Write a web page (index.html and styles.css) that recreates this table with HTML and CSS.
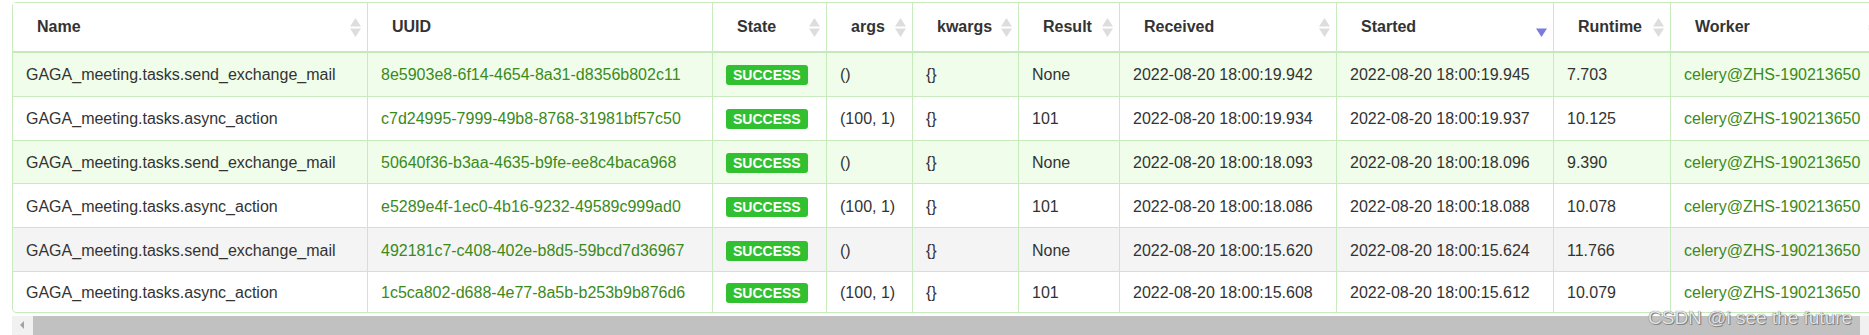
FILE: index.html
```html
<!DOCTYPE html>
<html>
<head>
<meta charset="utf-8">
<link rel="stylesheet" href="styles.css">
</head>
<body>
<div class="page">
  <div class="scroller">
    <table class="tasks">
      <colgroup>
        <col class="c-name"><col class="c-uuid"><col class="c-state"><col class="c-args"><col class="c-kwargs"><col class="c-result"><col class="c-recv"><col class="c-start"><col class="c-run"><col class="c-worker">
      </colgroup>
      <thead>
        <tr>
          <th><div class="hd"><span>Name</span><svg class="sort" viewBox="0 0 11 19"><polygon points="0,8.5 5.5,0 11,8.5"/><polygon points="0,10.5 5.5,19 11,10.5"/></svg></div></th>
          <th><div class="hd"><span>UUID</span></div></th>
          <th><div class="hd"><span>State</span><svg class="sort" viewBox="0 0 11 19"><polygon points="0,8.5 5.5,0 11,8.5"/><polygon points="0,10.5 5.5,19 11,10.5"/></svg></div></th>
          <th><div class="hd"><span>args</span><svg class="sort" viewBox="0 0 11 19"><polygon points="0,8.5 5.5,0 11,8.5"/><polygon points="0,10.5 5.5,19 11,10.5"/></svg></div></th>
          <th><div class="hd"><span>kwargs</span><svg class="sort" viewBox="0 0 11 19"><polygon points="0,8.5 5.5,0 11,8.5"/><polygon points="0,10.5 5.5,19 11,10.5"/></svg></div></th>
          <th><div class="hd"><span>Result</span><svg class="sort" viewBox="0 0 11 19"><polygon points="0,8.5 5.5,0 11,8.5"/><polygon points="0,10.5 5.5,19 11,10.5"/></svg></div></th>
          <th><div class="hd"><span>Received</span><svg class="sort" viewBox="0 0 11 19"><polygon points="0,8.5 5.5,0 11,8.5"/><polygon points="0,10.5 5.5,19 11,10.5"/></svg></div></th>
          <th><div class="hd"><span>Started</span><svg class="sort desc" viewBox="0 0 11 19"><polygon points="0,10.5 5.5,19 11,10.5"/></svg></div></th>
          <th><div class="hd"><span>Runtime</span><svg class="sort" viewBox="0 0 11 19"><polygon points="0,8.5 5.5,0 11,8.5"/><polygon points="0,10.5 5.5,19 11,10.5"/></svg></div></th>
          <th><div class="hd"><span>Worker</span><svg class="sort" viewBox="0 0 11 19"><polygon points="0,8.5 5.5,0 11,8.5"/><polygon points="0,10.5 5.5,19 11,10.5"/></svg></div></th>
        </tr>
      </thead>
      <tbody>
        <tr class="r-green">
          <td>GAGA_meeting.tasks.send_exchange_mail</td>
          <td class="link">8e5903e8-6f14-4654-8a31-d8356b802c11</td>
          <td><span class="badge">SUCCESS</span></td>
          <td>()</td>
          <td>{}</td>
          <td>None</td>
          <td>2022-08-20 18:00:19.942</td>
          <td>2022-08-20 18:00:19.945</td>
          <td>7.703</td>
          <td class="link">celery@ZHS-190213650</td>
        </tr>
        <tr>
          <td>GAGA_meeting.tasks.async_action</td>
          <td class="link">c7d24995-7999-49b8-8768-31981bf57c50</td>
          <td><span class="badge">SUCCESS</span></td>
          <td>(100, 1)</td>
          <td>{}</td>
          <td>101</td>
          <td>2022-08-20 18:00:19.934</td>
          <td>2022-08-20 18:00:19.937</td>
          <td>10.125</td>
          <td class="link">celery@ZHS-190213650</td>
        </tr>
        <tr class="r-green">
          <td>GAGA_meeting.tasks.send_exchange_mail</td>
          <td class="link">50640f36-b3aa-4635-b9fe-ee8c4baca968</td>
          <td><span class="badge">SUCCESS</span></td>
          <td>()</td>
          <td>{}</td>
          <td>None</td>
          <td>2022-08-20 18:00:18.093</td>
          <td>2022-08-20 18:00:18.096</td>
          <td>9.390</td>
          <td class="link">celery@ZHS-190213650</td>
        </tr>
        <tr>
          <td>GAGA_meeting.tasks.async_action</td>
          <td class="link">e5289e4f-1ec0-4b16-9232-49589c999ad0</td>
          <td><span class="badge">SUCCESS</span></td>
          <td>(100, 1)</td>
          <td>{}</td>
          <td>101</td>
          <td>2022-08-20 18:00:18.086</td>
          <td>2022-08-20 18:00:18.088</td>
          <td>10.078</td>
          <td class="link">celery@ZHS-190213650</td>
        </tr>
        <tr class="r-gray">
          <td>GAGA_meeting.tasks.send_exchange_mail</td>
          <td class="link">492181c7-c408-402e-b8d5-59bcd7d36967</td>
          <td><span class="badge">SUCCESS</span></td>
          <td>()</td>
          <td>{}</td>
          <td>None</td>
          <td>2022-08-20 18:00:15.620</td>
          <td>2022-08-20 18:00:15.624</td>
          <td>11.766</td>
          <td class="link">celery@ZHS-190213650</td>
        </tr>
        <tr class="r-last">
          <td>GAGA_meeting.tasks.async_action</td>
          <td class="link">1c5ca802-d688-4e77-8a5b-b253b9b876d6</td>
          <td><span class="badge">SUCCESS</span></td>
          <td>(100, 1)</td>
          <td>{}</td>
          <td>101</td>
          <td>2022-08-20 18:00:15.608</td>
          <td>2022-08-20 18:00:15.612</td>
          <td>10.079</td>
          <td class="link">celery@ZHS-190213650</td>
        </tr>
      </tbody>
    </table>
  </div>
  <div class="hscroll">
    <div class="arrow"></div>
    <div class="thumb"></div>
  </div>
  <div class="watermark">CSDN @i see the future</div>
</div>
</body>
</html>
```
FILE: styles.css
```css
html, body {
  margin: 0;
  padding: 0;
  background: #ffffff;
}
body {
  font-family: "Liberation Sans", Arial, sans-serif;
  font-size: 16px;
  color: #333333;
  overflow: hidden;
}
.page {
  position: relative;
  width: 1869px;
  height: 335px;
  padding: 2px 0 0 12px;
  box-sizing: border-box;
  overflow: hidden;
}
.scroller {
  overflow: hidden;
  width: 1857px;
}
.tasks {
  table-layout: fixed;
  width: 1874px;
  border-collapse: separate;
  border-spacing: 0;
  border: 1px solid #c8ebbd;
  border-radius: 4px;
}
.c-name { width: 354px; }
.c-uuid { width: 345px; }
.c-state { width: 114px; }
.c-args { width: 86px; }
.c-kwargs { width: 106px; }
.c-result { width: 101px; }
.c-recv { width: 217px; }
.c-start { width: 217px; }
.c-run { width: 117px; }
.c-worker { width: 215px; }

.tasks th, .tasks td {
  box-sizing: border-box;
  border-left: 1px solid #c8ebbd;
  white-space: nowrap;
  overflow: hidden;
}
.tasks th:first-child, .tasks td:first-child {
  border-left: none;
}
.tasks th {
  height: 50px;
  padding: 0 6px 0 24px;
  border-bottom: 2px solid #c6e9b9;
  text-align: left;
  font-weight: bold;
  color: #333333;
  background: #ffffff;
}
.hd {
  display: flex;
  align-items: center;
  justify-content: space-between;
  height: 47px;
}
.sort {
  width: 11px;
  height: 19px;
  flex: none;
  fill: #dddddd;
}
.sort.desc {
  fill: #7b7bdf;
}
.tasks td {
  height: 43.8px;
  padding: 2px 8px 0 13px;
  border-bottom: 1px solid #c8ebbd;
  vertical-align: middle;
  color: #333333;
}
.r-green td { background: #effdea; }
.r-gray td { background: #f4f4f4; }
.r-last td {
  height: 40px;
  border-bottom: none;
}
.tasks td.link { color: #3b8a1b; }
.badge {
  display: inline-block;
  height: 20px;
  line-height: 20px;
  padding: 0 7px;
  border-radius: 3px;
  background: #30c030;
  color: #ffffff;
  font-size: 14px;
  font-weight: bold;
  vertical-align: middle;
}
.hscroll {
  display: flex;
  align-items: center;
  margin-top: 3px;
  height: 19px;
  background: #f1f1f1;
  width: 1857px;
}
.arrow {
  width: 0;
  height: 0;
  margin-left: 8px;
  border-top: 4px solid transparent;
  border-bottom: 4px solid transparent;
  border-right: 4px solid #a3a3a3;
}
.thumb {
  margin-left: 9px;
  width: 1827px;
  height: 19px;
  background: #c1c1c1;
}
.watermark {
  position: absolute;
  left: 1648px;
  top: 308px;
  font-family: "Liberation Sans", Arial, sans-serif;
  font-size: 19px;
  line-height: 19px;
  color: #e4e4e4;
  text-shadow: 0 0 1px #555555, 1px 1px 0 #8a8a8a;
  white-space: nowrap;
}
```
